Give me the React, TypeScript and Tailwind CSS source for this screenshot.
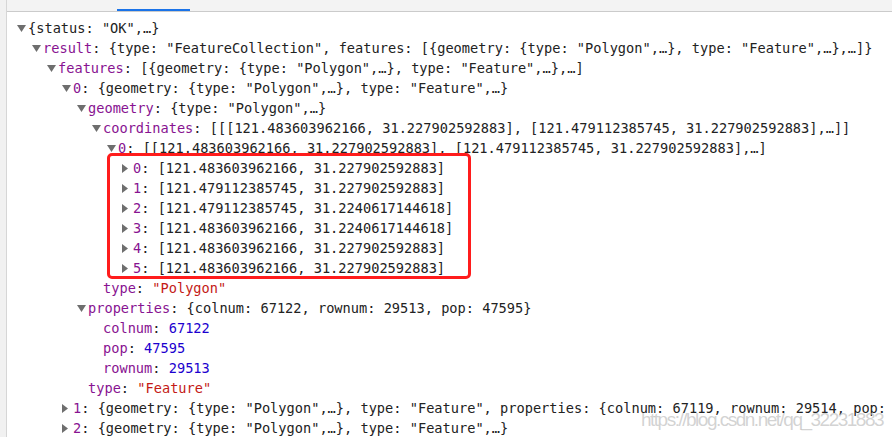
import React from "react";

type Part = { t: string; c?: "key" | "str" | "num" };
type Row = {
  depth: number;
  arrow?: "open" | "closed";
  parts: Part[];
};

// indent per depth, text starts at 18 + pl
const indent = [
  "pl-[10px]",
  "pl-[25px]",
  "pl-[40px]",
  "pl-[55px]",
  "pl-[70px]",
  "pl-[85px]",
  "pl-[100px]",
  "pl-[115px]",
];

const colors = {
  key: "text-[#881391]",
  str: "text-[#c41a16]",
  num: "text-[#1c00cf]",
};

const k = (t: string): Part => ({ t, c: "key" });
const p = (t: string): Part => ({ t });

const coords = [
  "[121.483603962166, 31.227902592883]",
  "[121.479112385745, 31.227902592883]",
  "[121.479112385745, 31.2240617144618]",
  "[121.483603962166, 31.2240617144618]",
  "[121.483603962166, 31.227902592883]",
  "[121.483603962166, 31.227902592883]",
];

const rows: Row[] = [
  { depth: 0, arrow: "open", parts: [p('{status: "OK",…}')] },
  {
    depth: 1,
    arrow: "open",
    parts: [
      k("result"),
      p(': {type: "FeatureCollection", features: [{geometry: {type: "Polygon",…}, type: "Feature",…},…]}'),
    ],
  },
  {
    depth: 2,
    arrow: "open",
    parts: [k("features"), p(': [{geometry: {type: "Polygon",…}, type: "Feature",…},…]')],
  },
  {
    depth: 3,
    arrow: "open",
    parts: [k("0"), p(': {geometry: {type: "Polygon",…}, type: "Feature",…}')],
  },
  { depth: 4, arrow: "open", parts: [k("geometry"), p(': {type: "Polygon",…}')] },
  {
    depth: 5,
    arrow: "open",
    parts: [
      k("coordinates"),
      p(": [[[121.483603962166, 31.227902592883], [121.479112385745, 31.227902592883],…]]"),
    ],
  },
  {
    depth: 6,
    arrow: "open",
    parts: [k("0"), p(": [[121.483603962166, 31.227902592883], [121.479112385745, 31.227902592883],…]")],
  },
  ...coords.map((c, i) => ({
    depth: 7,
    arrow: "closed" as const,
    parts: [k(String(i)), p(": " + c)],
  })),
  { depth: 5, parts: [k("type"), p(": "), { t: '"Polygon"', c: "str" }] },
  {
    depth: 4,
    arrow: "open",
    parts: [k("properties"), p(": {colnum: 67122, rownum: 29513, pop: 47595}")],
  },
  { depth: 5, parts: [k("colnum"), p(": "), { t: "67122", c: "num" }] },
  { depth: 5, parts: [k("pop"), p(": "), { t: "47595", c: "num" }] },
  { depth: 5, parts: [k("rownum"), p(": "), { t: "29513", c: "num" }] },
  { depth: 4, parts: [k("type"), p(": "), { t: '"Feature"', c: "str" }] },
  {
    depth: 3,
    arrow: "closed",
    parts: [
      k("1"),
      p(': {geometry: {type: "Polygon",…}, type: "Feature", properties: {colnum: 67119, rownum: 29514, pop: 47595}}'),
    ],
  },
  {
    depth: 3,
    arrow: "closed",
    parts: [k("2"), p(': {geometry: {type: "Polygon",…}, type: "Feature",…}')],
  },
];

function Arrow({ kind }: { kind?: "open" | "closed" }) {
  return (
    <span className="w-[11px] shrink-0 flex items-center">
      {kind === "open" && (
        <svg width="9" height="7" viewBox="0 0 9 7">
          <path d="M0 0 L9 0 L4.5 7 Z" fill="#6e6e6e" />
        </svg>
      )}
      {kind === "closed" && (
        <svg width="6" height="9" viewBox="0 0 6 9">
          <path d="M0 0 L6 4.5 L0 9 Z" fill="#6e6e6e" />
        </svg>
      )}
    </span>
  );
}

const tabs = ["Headers", "Preview", "Response", "Initiator", "Timing", "Cookies"];

export default function App() {
  return (
    <div className="relative w-[892px] h-[437px] overflow-hidden bg-white flex font-['Liberation_Sans',sans-serif]">
      {/* left pane edge */}
      <div className="w-[7px] shrink-0 bg-[#f1f1f1] border-r border-[#d6d6d6]" />

      <div className="flex-1 flex flex-col min-w-0">
        {/* tab strip, mostly scrolled out of view */}
        <div className="h-[12px] shrink-0 bg-[#f3f3f3] border-b border-[#cbcbcb] flex items-end overflow-hidden pl-[35px]">
          {tabs.map((t) => (
            <div
              key={t}
              className={
                "h-[28px] px-[15px] flex items-center text-[12px] text-[#555] " +
                (t === "Preview" ? "border-b-2 border-[#1a73e8]" : "border-b-2 border-transparent")
              }
            >
              <span className="-translate-y-[10px]">{t}</span>
            </div>
          ))}
        </div>

        {/* object tree */}
        <div className="pt-[6px] font-['DejaVu_Sans_Mono',monospace] text-[13.65px] text-[#222]">
          {rows.map((r, i) => (
            <div key={i} className={"h-[20px] flex items-center whitespace-nowrap " + indent[r.depth]}>
              <Arrow kind={r.arrow} />
              <span>
                {r.parts.map((pt, j) => (
                  <span key={j} className={pt.c ? colors[pt.c] : ""}>
                    {pt.t}
                  </span>
                ))}
              </span>
            </div>
          ))}
        </div>
      </div>

      {/* annotation box */}
      <div className="absolute left-[107px] top-[153px] w-[364px] h-[126px] border-[3px] border-[#ff1c1c] rounded-[5px]" />

      {/* watermark */}
      <div className="absolute left-[641px] top-[406px] text-[19px] tracking-[-1.5px] text-[#c0c0c0]/70 font-['Liberation_Sans',sans-serif] whitespace-nowrap">
        https://blog.csdn.net/qq_32231883
      </div>
    </div>
  );
}
